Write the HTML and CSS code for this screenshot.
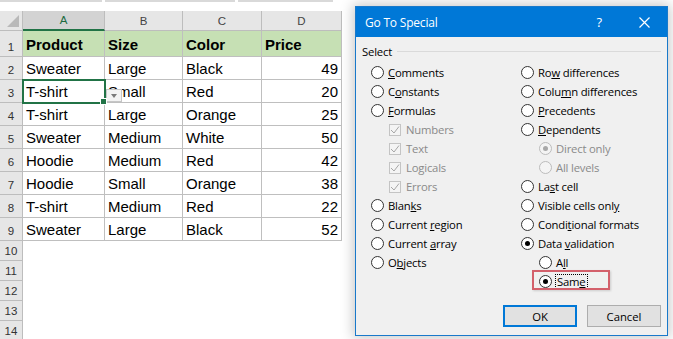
FILE: index.html
```html
<!DOCTYPE html>
<html>
	<head>
		<meta charset="UTF-8">
		<title>Go To Special</title>
		<link rel="stylesheet" href="styles.css">
	</head>
	<body>
		<div class="sheet">
			<div class="topbar"><i></i><i></i><i></i></div>
			<div class="grid">
				<div class="corner"><span></span></div>
				<div class="colh sel">A</div>
				<div class="colh">B</div>
				<div class="colh">C</div>
				<div class="colh">D</div>

				<div class="rowh r1">1</div>
				<div class="c hd">Product</div>
				<div class="c hd">Size</div>
				<div class="c hd">Color</div>
				<div class="c hd">Price</div>

				<div class="rowh">2</div>
				<div class="c">Sweater</div>
				<div class="c">Large</div>
				<div class="c">Black</div>
				<div class="c num">49</div>

				<div class="rowh">3</div>
				<div class="c active">T-shirt</div>
				<div class="c drop">Small<span class="ddbtn"></span></div>
				<div class="c">Red</div>
				<div class="c num">20</div>

				<div class="rowh">4</div>
				<div class="c">T-shirt</div>
				<div class="c">Large</div>
				<div class="c">Orange</div>
				<div class="c num">25</div>

				<div class="rowh">5</div>
				<div class="c">Sweater</div>
				<div class="c">Medium</div>
				<div class="c">White</div>
				<div class="c num">50</div>

				<div class="rowh">6</div>
				<div class="c">Hoodie</div>
				<div class="c">Medium</div>
				<div class="c">Red</div>
				<div class="c num">42</div>

				<div class="rowh">7</div>
				<div class="c">Hoodie</div>
				<div class="c">Small</div>
				<div class="c">Orange</div>
				<div class="c num">38</div>

				<div class="rowh">8</div>
				<div class="c">T-shirt</div>
				<div class="c">Medium</div>
				<div class="c">Red</div>
				<div class="c num">22</div>

				<div class="rowh">9</div>
				<div class="c">Sweater</div>
				<div class="c">Large</div>
				<div class="c">Black</div>
				<div class="c num">52</div>

				<div class="rowh">10</div><div class="empty"></div>
				<div class="rowh">11</div><div class="empty"></div>
				<div class="rowh">12</div><div class="empty"></div>
				<div class="rowh">13</div><div class="empty"></div>
				<div class="rowh">14</div><div class="empty"></div>
			</div>
		</div>

		<div class="dialog">
			<div class="titlebar">
				<span class="title">Go To Special</span>
				<span class="help">?</span>
				<svg class="close" width="11" height="11" viewBox="0 0 11 11">
					<path d="M0.5 0.5 L10.5 10.5 M10.5 0.5 L0.5 10.5" stroke="#fff" stroke-width="1.2" fill="none"/>
				</svg>
			</div>
			<div class="dbody">
				<div class="legend"><span>Select</span></div>
				<div class="options">
					<div class="opt"><span class="radio"></span><span><u>C</u>omments</span></div>
					<div class="opt"><span class="radio"></span><span>C<u>o</u>nstants</span></div>
					<div class="opt"><span class="radio"></span><span><u>F</u>ormulas</span></div>
					<div class="opt sub off"><span class="check"><svg width="10" height="10" viewBox="0 0 10 10"><path d="M1 5 L4 8 L9 1.5" stroke="#a6a6a6" stroke-width="1" fill="none"/></svg></span><span>Numbers</span></div>
					<div class="opt sub off"><span class="check"><svg width="10" height="10" viewBox="0 0 10 10"><path d="M1 5 L4 8 L9 1.5" stroke="#a6a6a6" stroke-width="1" fill="none"/></svg></span><span>Text</span></div>
					<div class="opt sub off"><span class="check"><svg width="10" height="10" viewBox="0 0 10 10"><path d="M1 5 L4 8 L9 1.5" stroke="#a6a6a6" stroke-width="1" fill="none"/></svg></span><span>Logicals</span></div>
					<div class="opt sub off"><span class="check"><svg width="10" height="10" viewBox="0 0 10 10"><path d="M1 5 L4 8 L9 1.5" stroke="#a6a6a6" stroke-width="1" fill="none"/></svg></span><span>Errors</span></div>
					<div class="opt"><span class="radio"></span><span>Blan<u>k</u>s</span></div>
					<div class="opt"><span class="radio"></span><span>Current <u>r</u>egion</span></div>
					<div class="opt"><span class="radio"></span><span>Current <u>a</u>rray</span></div>
					<div class="opt"><span class="radio"></span><span>O<u>b</u>jects</span></div>
					<div class="opt"></div>

					<div class="opt"><span class="radio"></span><span>Ro<u>w</u> differences</span></div>
					<div class="opt"><span class="radio"></span><span>Colu<u>m</u>n differences</span></div>
					<div class="opt"><span class="radio"></span><span><u>P</u>recedents</span></div>
					<div class="opt"><span class="radio"></span><span><u>D</u>ependents</span></div>
					<div class="opt sub off"><span class="radio on"></span><span>Direct only</span></div>
					<div class="opt sub off"><span class="radio"></span><span>All levels</span></div>
					<div class="opt"><span class="radio"></span><span>La<u>s</u>t cell</span></div>
					<div class="opt"><span class="radio"></span><span>Visible cells onl<u>y</u></span></div>
					<div class="opt"><span class="radio"></span><span>Condi<u>t</u>ional formats</span></div>
					<div class="opt"><span class="radio on"></span><span>Data <u>v</u>alidation</span></div>
					<div class="opt sub"><span class="radio"></span><span>A<u>l</u>l</span></div>
					<div class="opt sub marked"><span class="radio on"></span><span class="focus">Sam<u>e</u></span></div>
				</div>
				<div class="buttons">
					<button class="btn ok">OK</button>
					<button class="btn">Cancel</button>
				</div>
			</div>
		</div>
	</body>
</html>
```

FILE: styles.css
```css
body {
	margin: 0;
	padding: 0;
	background: #ffffff;
	width: 673px;
	height: 339px;
	overflow: hidden;
	position: relative;
}

/* ---- spreadsheet ---- */

.sheet {
	font-family: "Liberation Sans", Arial, sans-serif;
	width: 342px;
}

.topbar {
	height: 11px;
	display: flex;
	gap: 3px;
}

.topbar i {
	display: block;
	height: 2px;
	background: #d9d9d9;
}

.topbar i:nth-child(1) { width: 102px; }
.topbar i:nth-child(2) { width: 130px; }
.topbar i:nth-child(3) { width: 95px; }

.grid {
	display: grid;
	grid-template-columns: 23px 82px 78px 79px 80px;
	grid-template-rows: 20px 26px repeat(8, 23px) repeat(5, 20px);
}

.grid > div {
	box-sizing: border-box;
}

.corner {
	background: #e6e6e6;
	border-right: 1px solid #bdbdbd;
	border-bottom: 1px solid #bdbdbd;
	position: relative;
}

.corner span {
	position: absolute;
	right: 3px;
	bottom: 3px;
	width: 0;
	height: 0;
	border-left: 12px solid transparent;
	border-bottom: 12px solid #b9b9b9;
}

.colh {
	background: #e6e6e6;
	border-right: 1px solid #bdbdbd;
	border-bottom: 1px solid #bdbdbd;
	font-size: 11.5px;
	color: #444444;
	display: flex;
	align-items: center;
	justify-content: center;
}

.colh.sel {
	background: #d3d3d3;
	color: #1e6b41;
	border-bottom: 2px solid #217346;
}

.rowh {
	background: #e6e6e6;
	border-right: 1px solid #bdbdbd;
	border-bottom: 1px solid #bdbdbd;
	font-size: 11.5px;
	color: #333333;
	display: flex;
	align-items: flex-end;
	justify-content: center;
	padding-bottom: 3px;
}

.c {
	border-right: 1px solid #bfbfbf;
	border-bottom: 1px solid #bfbfbf;
	font-size: 15px;
	line-height: 18px;
	color: #000000;
	padding: 0 3px 1px;
	display: flex;
	align-items: flex-end;
	white-space: nowrap;
	overflow: hidden;
}

.c.hd {
	background: #c6e0b4;
	font-weight: bold;
	padding-bottom: 2px;
}

.c.num {
	justify-content: flex-end;
}

.c.active {
	outline: 2px solid #217346;
	outline-offset: -1px;
	position: relative;
	overflow: visible;
	z-index: 2;
}

.c.active::after {
	content: "";
	position: absolute;
	right: -3px;
	bottom: -3px;
	width: 5px;
	height: 5px;
	background: #217346;
	border: 1px solid #ffffff;
}

.c.drop {
	position: relative;
}

.ddbtn {
	position: absolute;
	left: 1px;
	top: 9px;
	width: 16px;
	height: 13px;
	box-sizing: border-box;
	background: #f3f3f3;
	border: 1px solid #c6c6c6;
}

.ddbtn::after {
	content: "";
	position: absolute;
	left: 4px;
	top: 4px;
	border-left: 3.5px solid transparent;
	border-right: 3.5px solid transparent;
	border-top: 4px solid #7a7a7a;
}

.empty {
	grid-column: span 4;
}

/* ---- dialog ---- */

.dialog {
	position: absolute;
	left: 355px;
	top: 6px;
	width: 313px;
	height: 330px;
	box-sizing: border-box;
	border: 1px solid #1979ca;
	background: #f0f0f0;
	box-shadow: 0 0 12px 2px rgba(0, 0, 0, 0.22);
	font-family: "Open Sans", "Noto Sans", sans-serif;
	font-size: 11.3px;
	letter-spacing: -0.2px;
	display: flex;
	flex-direction: column;
}

.titlebar {
	height: 30px;
	background: #0078d7;
	color: #ffffff;
	display: flex;
	align-items: center;
	padding-left: 9px;
	font-size: 12px;
}

.title {
	flex: 1;
}

.help {
	font-size: 13px;
	margin-right: 37px;
}

.close {
	margin-right: 17px;
}

.dbody {
	flex: 1;
	padding: 7px 6px 0;
	display: flex;
	flex-direction: column;
}

.legend {
	height: 15px;
	display: flex;
	align-items: center;
	gap: 5px;
	color: #000000;
}

.legend::after {
	content: "";
	flex: 1;
	height: 1px;
	background: #dadada;
}

.options {
	margin: 4px 0 0 9px;
	display: grid;
	grid-template-columns: 150px 1fr;
	grid-template-rows: repeat(12, 19px);
	grid-auto-flow: column;
}

.opt {
	display: flex;
	align-items: center;
	color: #000000;
	white-space: nowrap;
}

.opt.sub {
	padding-left: 18px;
}

.opt.off {
	color: #8a8a8a;
}

.radio {
	width: 13px;
	height: 13px;
	box-sizing: border-box;
	border: 1px solid #333333;
	border-radius: 50%;
	background: #ffffff;
	margin-right: 4px;
	display: grid;
	place-items: center;
	flex: none;
}

.radio.on::after {
	content: "";
	width: 5px;
	height: 5px;
	border-radius: 50%;
	background: #000000;
}

.off .radio {
	border-color: #bcbcbc;
	background: #f4f4f4;
}

.off .radio.on::after {
	background: #a8a8a8;
}

.check {
	width: 12px;
	height: 12px;
	box-sizing: border-box;
	border: 1px solid #c4c4c4;
	background: #f4f4f4;
	margin-right: 5px;
	display: grid;
	place-items: center;
	flex: none;
}

.opt.marked {
	position: relative;
}

.opt.marked::before {
	content: "";
	position: absolute;
	left: 11px;
	top: -2px;
	width: 78px;
	height: 20px;
	box-sizing: border-box;
	border: 2px solid #d3606b;
	box-shadow: 1px 1px 2px rgba(0, 0, 0, 0.15);
}

.focus {
	outline: 1px dotted #000000;
	outline-offset: 0;
	padding: 0 1px;
	line-height: 13px;
}

.buttons {
	margin-top: 14px;
	display: flex;
	justify-content: flex-end;
	gap: 10px;
}

.btn {
	width: 74px;
	height: 22px;
	box-sizing: border-box;
	background: #e1e1e1;
	border: 1px solid #adadad;
	font-family: "Open Sans", "Noto Sans", sans-serif;
	font-size: 11.3px;
	color: #000000;
	padding: 0;
}

.btn.ok {
	border: 2px solid #0078d7;
}
```
